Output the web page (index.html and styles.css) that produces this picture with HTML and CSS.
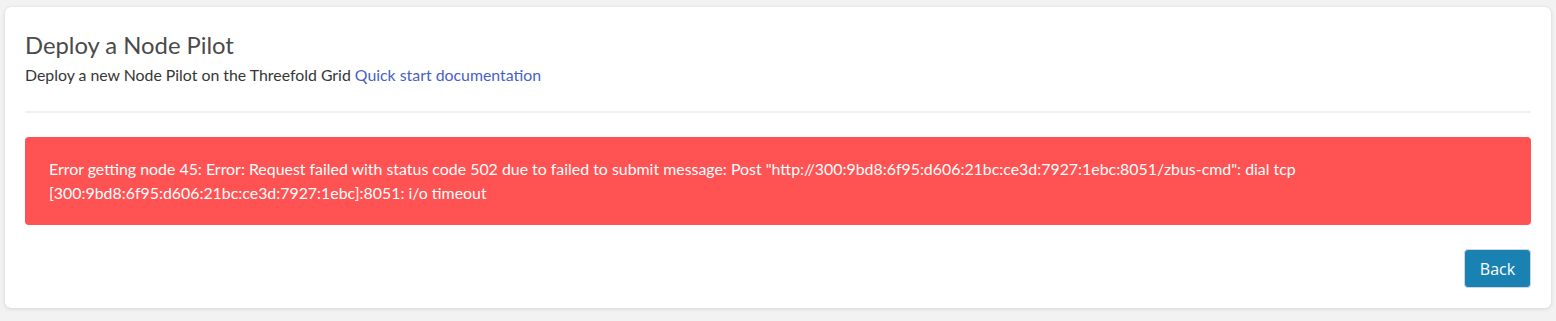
FILE: index.html
```html
<!DOCTYPE html>
<html>
<head>
<meta charset="utf-8">
<link rel="stylesheet" href="styles.css">
</head>
<body>
<div class="page">
  <div class="card">
    <div class="head">
      <h1 class="title">Deploy a Node Pilot</h1>
      <p class="subtitle">Deploy a new Node Pilot on the Threefold Grid <a href="#" class="link">Quick start documentation</a></p>
    </div>
    <div class="divider"></div>
    <div class="alert">Error getting node 45: Error: Request failed with status code 502 due to failed to submit message: Post "http://300:9bd8:6f95:d606:21bc:ce3d:7927:1ebc:8051/zbus-cmd": dial tcp [300:9bd8:6f95:d606:21bc:ce3d:7927:1ebc]:8051: i/o timeout</div>
    <div class="actions">
      <button class="btn">Back</button>
    </div>
  </div>
</div>
</body>
</html>
```
FILE: styles.css
```css
* { box-sizing: border-box; }
html, body { margin: 0; padding: 0; }
body {
  background: #f2f2f2;
  font-family: Lato, "Liberation Sans", sans-serif;
  width: 1556px;
  height: 321px;
  overflow: hidden;
}
.page { padding: 7px 5px 0 5px; }
.card {
  background: #fff;
  border-radius: 6px;
  box-shadow: 0 1px 4px rgba(0,0,0,0.12), 0 0 1px rgba(0,0,0,0.08);
  padding: 20px 20px 20px 20px;
  height: 301px;
}
.head { padding-top: 4px; }
.title {
  margin: 0;
  font-size: 23.8px;
  font-weight: 400;
  color: #4a4a4a;
  line-height: 28px;
}
.subtitle {
  margin: 5px 0 0 0;
  font-size: 15.85px;
  color: #363636;
  line-height: 22px;
}
.link { color: #485fc7; text-decoration: none; }
.divider {
  height: 2px;
  background: #f0f0f0;
  margin-top: 25px;
}
.alert {
  margin-top: 24px;
  background: #ff5252;
  color: #fff;
  border-radius: 4px;
  padding: 20px 22px 20px 24px;
  font-size: 15.9px;
  line-height: 24px;
  min-height: 88px;
}
.actions {
  display: flex;
  justify-content: flex-end;
  margin-top: 24px;
}
.btn {
  background: #1a82b2;
  color: #fff;
  border: 1px solid #d0d6da;
  border-radius: 4px;
  font-family: "Open Sans", "Noto Sans", sans-serif;
  font-size: 16px;
  width: 67px;
  height: 39px;
  padding: 0;
  margin-right: 0;
}
```
